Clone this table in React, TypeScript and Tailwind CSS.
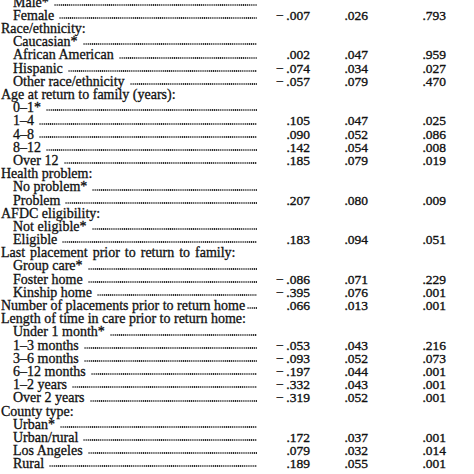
type Row =
  | { kind: 'head'; label: string; wide?: boolean }
  | { kind: 'item'; label: string; vals?: [string, string, string]; top?: boolean };

const rows: Row[] = [
  { kind: 'item', label: 'Male*' },
  { kind: 'item', label: 'Female', vals: ['−.007', '.026', '.793'] },
  { kind: 'head', label: 'Race/ethnicity:' },
  { kind: 'item', label: 'Caucasian*' },
  { kind: 'item', label: 'African American', vals: ['.002', '.047', '.959'] },
  { kind: 'item', label: 'Hispanic', vals: ['−.074', '.034', '.027'] },
  { kind: 'item', label: 'Other race/ethnicity', vals: ['−.057', '.079', '.470'] },
  { kind: 'head', label: 'Age at return to family (years):' },
  { kind: 'item', label: '0–1*' },
  { kind: 'item', label: '1–4', vals: ['.105', '.047', '.025'] },
  { kind: 'item', label: '4–8', vals: ['.090', '.052', '.086'] },
  { kind: 'item', label: '8–12', vals: ['.142', '.054', '.008'] },
  { kind: 'item', label: 'Over 12', vals: ['.185', '.079', '.019'] },
  { kind: 'head', label: 'Health problem:' },
  { kind: 'item', label: 'No problem*' },
  { kind: 'item', label: 'Problem', vals: ['.207', '.080', '.009'] },
  { kind: 'head', label: 'AFDC eligibility:' },
  { kind: 'item', label: 'Not eligible*' },
  { kind: 'item', label: 'Eligible', vals: ['.183', '.094', '.051'] },
  { kind: 'head', label: 'Last placement prior to return to family:', wide: true },
  { kind: 'item', label: 'Group care*' },
  { kind: 'item', label: 'Foster home', vals: ['−.086', '.071', '.229'] },
  { kind: 'item', label: 'Kinship home', vals: ['−.395', '.076', '.001'] },
  { kind: 'item', label: 'Number of placements prior to return home', vals: ['.066', '.013', '.001'], top: true },
  { kind: 'head', label: 'Length of time in care prior to return home:' },
  { kind: 'item', label: 'Under 1 month*' },
  { kind: 'item', label: '1–3 months', vals: ['−.053', '.043', '.216'] },
  { kind: 'item', label: '3–6 months', vals: ['−.093', '.052', '.073'] },
  { kind: 'item', label: '6–12 months', vals: ['−.197', '.044', '.001'] },
  { kind: 'item', label: '1–2 years', vals: ['−.332', '.043', '.001'] },
  { kind: 'item', label: 'Over 2 years', vals: ['−.319', '.052', '.001'] },
  { kind: 'head', label: 'County type:' },
  { kind: 'item', label: 'Urban*' },
  { kind: 'item', label: 'Urban/rural', vals: ['.172', '.037', '.001'] },
  { kind: 'item', label: 'Los Angeles', vals: ['.079', '.032', '.014'] },
  { kind: 'item', label: 'Rural', vals: ['.189', '.055', '.001'] },
];

function Num({ v }: { v: string }) {
  const neg = v.startsWith('−');
  return (
    <span className="text-right whitespace-nowrap text-[13.5px] [-webkit-text-stroke:0.35px_#111]">
      {neg ? '−\u2009' + v.slice(1) : v}
    </span>
  );
}

function Leader({ short }: { short?: boolean }) {
  return (
    <span
      className={`mb-[3px] h-[2px] bg-[radial-gradient(circle,#222_0.6px,transparent_0.95px)] bg-[length:2.1px_2px] bg-repeat-x ${
        short ? 'ml-auto w-[10px]' : 'ml-[5px] flex-1'
      }`}
    />
  );
}

export default function App() {
  return (
    <div className="w-[474px] h-[474px] overflow-hidden bg-white text-[#111] font-['Liberation_Serif',serif] text-[14px]">
      <div className="-mt-[4.3px] grid grid-cols-[257px_53px_58px_78px]">
        {rows.map((r, i) =>
          r.kind === 'head' ? (
            <div
              key={i}
              className={`col-span-4 h-[13.2px] leading-[13.2px] pl-[1px] whitespace-nowrap [-webkit-text-stroke:0.3px_#111] ${
                r.wide ? '[word-spacing:1.5px]' : ''
              }`}
            >
              {r.label}
            </div>
          ) : (
            <div key={i} className="col-span-4 grid grid-cols-subgrid h-[13.2px] leading-[13.2px]">
              <div
                className={`flex items-end whitespace-nowrap [-webkit-text-stroke:0.3px_#111] ${
                  r.top ? 'pl-[1px]' : 'pl-[13px]'
                }`}
              >
                <span>{r.label}</span>
                <Leader short={r.top} />
              </div>
              {r.vals ? (
                <>
                  <Num v={r.vals[0]} />
                  <Num v={r.vals[1]} />
                  <Num v={r.vals[2]} />
                </>
              ) : null}
            </div>
          )
        )}
      </div>
    </div>
  );
}
